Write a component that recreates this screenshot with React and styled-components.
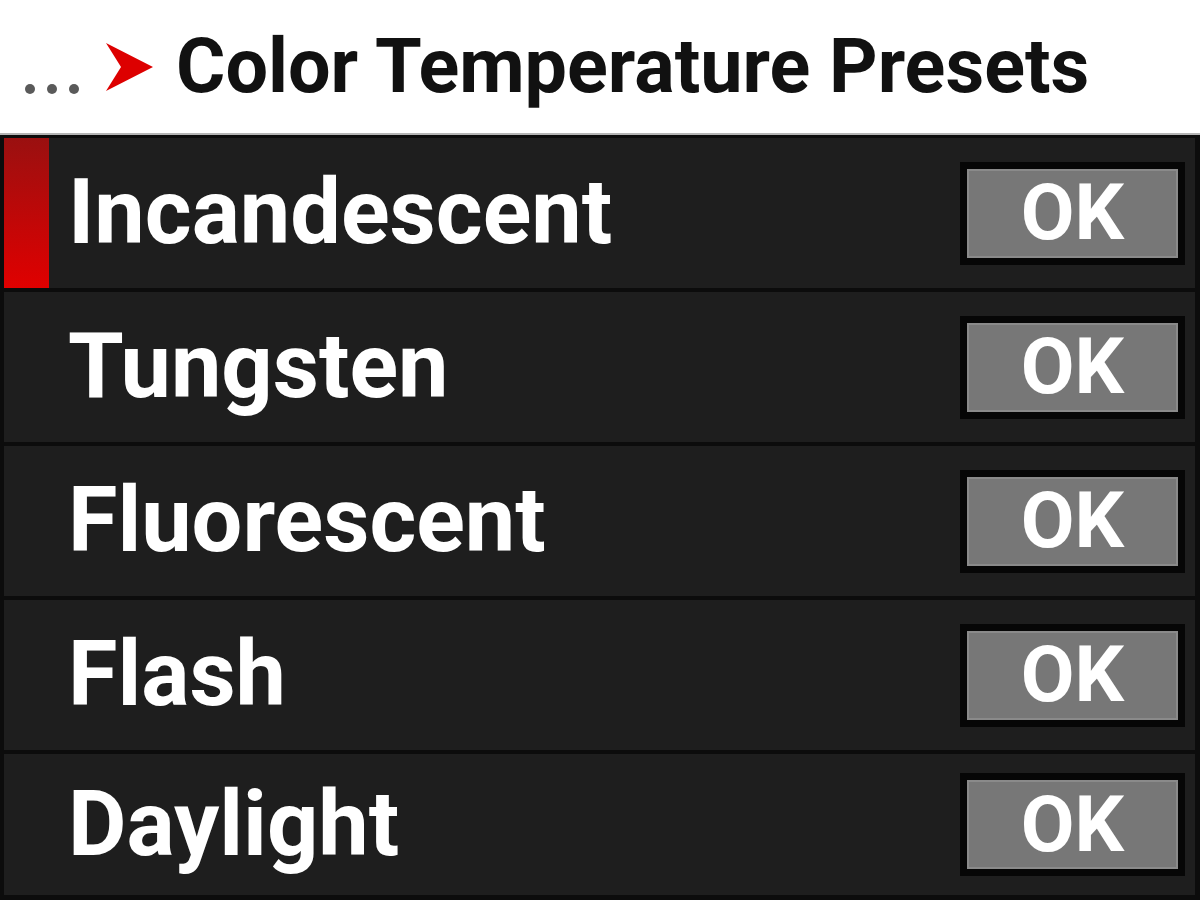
import React from "react";
import styled, { createGlobalStyle } from "styled-components";

const Global = createGlobalStyle`
  html, body { margin: 0; padding: 0; background: #0c0c0c; }
  * { box-sizing: border-box; }
`;

const Screen = styled.div`
  width: 1200px;
  height: 900px;
  display: flex;
  flex-direction: column;
  font-family: Roboto, "Liberation Sans", sans-serif;
  overflow: hidden;
`;

const Header = styled.header`
  height: 135px;
  flex: none;
  background: #ffffff;
  border-bottom: 2px solid #b4b4b4;
  display: flex;
  align-items: center;
  padding-left: 25px;
`;

const Dots = styled.div`
  display: flex;
  gap: 12px;
  padding-top: 44px;
`;

const Dot = styled.span`
  width: 10px;
  height: 10px;
  border-radius: 50%;
  background: #5a5a5a;
`;

const Arrow = styled.svg`
  margin-left: 27px;
  width: 48px;
  height: 48px;
  flex: none;
`;

const Title = styled.h1`
  margin: 0 0 0 22px;
  font-size: 75.5px;
  font-weight: 700;
  color: #111;
  line-height: 1;
  white-space: nowrap;
`;

const List = styled.div`
  flex: 1;
  display: flex;
  flex-direction: column;
  gap: 4px;
  padding: 3px 5px 5px 4px;
  background: #0c0c0c;
`;

const Row = styled.div`
  display: flex;
  align-items: center;
  background: #1e1e1e;
  height: ${(p) => (p.$fill ? "auto" : "150px")};
  flex: ${(p) => (p.$fill ? "1" : "none")};
`;

const Marker = styled.div`
  width: 45px;
  align-self: stretch;
  flex: none;
  background: ${(p) =>
    p.$active ? "linear-gradient(180deg, #9a1010 0%, #e00000 100%)" : "transparent"};
`;

const Label = styled.span`
  margin-left: 19px;
  font-size: 90px;
  font-weight: 700;
  color: #ffffff;
  line-height: 1;
  white-space: nowrap;
`;

const OkButton = styled.button`
  margin-left: auto;
  margin-right: 10px;
  width: 225px;
  height: 103px;
  border: 7px solid #060606;
  background: #777777;
  box-shadow: inset 0 0 0 2px #8a8a8a;
  color: #ffffff;
  font-family: Roboto, "Liberation Sans", sans-serif;
  font-weight: 700;
  font-size: 78px;
  line-height: 1;
  padding: 0;
  display: flex;
  align-items: center;
  justify-content: center;
`;

const presets = ["Incandescent", "Tungsten", "Fluorescent", "Flash", "Daylight"];

export default function App() {
  return (
    <>
      <Global />
      <Screen>
        <Header>
          <Dots>
            <Dot />
            <Dot />
            <Dot />
          </Dots>
          <Arrow viewBox="0 0 48 48">
            <path d="M0 0 L47 24 L0 48 L15 24 Z" fill="#dd0000" />
          </Arrow>
          <Title>Color Temperature Presets</Title>
        </Header>
        <List>
          {presets.map((name, i) => (
            <Row key={name} $fill={i === presets.length - 1}>
              <Marker $active={i === 0} />
              <Label>{name}</Label>
              <OkButton>OK</OkButton>
            </Row>
          ))}
        </List>
      </Screen>
    </>
  );
}
